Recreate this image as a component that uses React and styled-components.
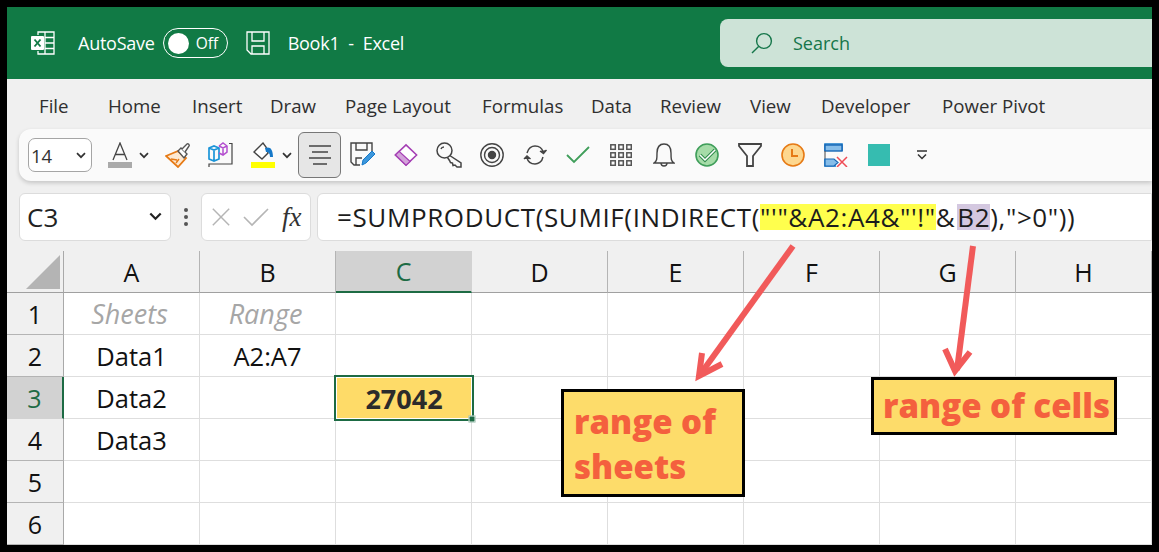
import React from "react";
import styled, { createGlobalStyle } from "styled-components";

const Global = createGlobalStyle`
  html, body { margin: 0; padding: 0; background: #000; }
  body { font-family: "Open Sans", "Noto Sans", sans-serif; }
`;

const Frame = styled.div`
  position: relative;
  box-sizing: border-box;
  width: 1159px;
  height: 552px;
  border: 7px solid #000;
  background: #fff;
  overflow: hidden;
  display: flex;
  flex-direction: column;
`;

const TitleBar = styled.header`
  height: 72px;
  flex: none;
  background: #117a45;
  color: #fff;
  display: flex;
  align-items: center;
  padding-left: 24px;
`;
const TitleText = styled.span`
  font-size: 18px;
  letter-spacing: -0.25px;
  white-space: pre;
  margin-left: ${(p) => p.$ml || 0}px;
`;
const Toggle = styled.div`
  box-sizing: border-box;
  width: 65px;
  height: 30px;
  margin-left: 8px;
  border: 1px solid #fff;
  border-radius: 15px;
  display: flex;
  align-items: center;
  padding-left: 4px;
  gap: 7px;
  font-size: 15.5px;
`;
const Knob = styled.span`
  width: 21px;
  height: 21px;
  border-radius: 50%;
  background: #fff;
`;
const SearchBox = styled.div`
  margin-left: auto;
  width: 432px;
  height: 48px;
  background: #cde3d7;
  border-radius: 8px 0 0 8px;
  display: flex;
  align-items: center;
  padding-left: 31px;
  gap: 20px;
  color: #15764a;
  font-size: 18px;
  box-sizing: border-box;
`;

const Ribbon = styled.section`
  flex: none;
  height: 172px;
  box-sizing: border-box;
  background: #f0f0f0;
  display: flex;
  flex-direction: column;
  padding-left: 12px;
`;
const Tabs = styled.nav`
  height: 50px;
  display: flex;
  align-items: center;
  padding: 3px 0 0 20px;
  box-sizing: border-box;
  color: #2f2f2f;
  font-size: 18.7px;
`;
const Tab = styled.span`
  width: ${(p) => p.$w}px;
  flex: none;
  white-space: nowrap;
`;
const Toolbar = styled.div`
  height: 52px;
  box-sizing: border-box;
  background: #fafafa;
  border-radius: 12px 0 0 12px;
  box-shadow: 0 2px 4px rgba(0, 0, 0, 0.18);
  display: flex;
  align-items: center;
  padding-left: 9px;
`;
const FontSelect = styled.div`
  box-sizing: border-box;
  width: 64px;
  height: 34px;
  background: #fff;
  border: 1px solid #a5a5a5;
  border-radius: 7px;
  display: flex;
  align-items: center;
  justify-content: space-between;
  padding: 0 5px 0 2px;
  font-size: 18.5px;
  color: #333;
  margin-right: 10px;
`;
const IconSlot = styled.div`
  flex: none;
  width: ${(p) => p.$w || 43}px;
  margin-left: ${(p) => p.$ml || 0}px;
  display: flex;
  justify-content: center;
  align-items: center;
`;
const ActiveSlot = styled.div`
  flex: none;
  box-sizing: border-box;
  width: 43px;
  height: 46px;
  margin-left: 5px;
  background: #e6e6e6;
  border: 1px solid #777;
  border-radius: 6px;
  display: flex;
  justify-content: center;
  align-items: center;
`;
const FormulaRow = styled.div`
  height: 48px;
  margin-top: 12px;
  display: flex;
  align-items: stretch;
`;
const Field = styled.div`
  box-sizing: border-box;
  background: #fff;
  border: 1px solid #dcdcdc;
  border-radius: 6px;
  display: flex;
  align-items: center;
`;
const NameBox = styled(Field)`
  width: 152px;
  padding: 0 8px 0 7px;
  justify-content: space-between;
  font-size: 26px;
  color: #222;
`;
const Dots = styled.div`
  width: 30px;
  display: flex;
  flex-direction: column;
  align-items: center;
  justify-content: center;
  gap: 3px;
  & > i { width: 4px; height: 4px; background: #555; border-radius: 50%; }
`;
const FxBox = styled(Field)`
  width: 110px;
  padding-left: 9px;
  gap: 12px;
`;
const FxText = styled.span`
  font-family: "Liberation Serif", serif;
  font-style: italic;
  font-weight: 400;
  font-size: 27px;
  color: #333;
  margin-left: 1px;
`;
const FormulaBox = styled(Field)`
  flex: 1;
  margin-left: 6px;
  padding-left: 19px;
  font-size: 26px;
  letter-spacing: 0.62px;
  color: #1c1c1c;
  border-radius: 6px 0 0 6px;
  white-space: pre;
`;
const Mark = styled.span`
  display: inline-block;
  line-height: 26px;
  background: ${(p) => p.$c};
  margin-left: ${(p) => p.$ml || 0}px;
`;

const Sheet = styled.div`
  display: grid;
  grid-template-columns: 57px repeat(8, 136px);
  grid-auto-rows: 42px;
  flex: none;
`;
const Corner = styled.div`
  box-sizing: border-box;
  background: #f0f0f0;
  border-right: 1px solid #a9a9a9;
  border-bottom: 1px solid #a0a0a0;
  display: flex;
  align-items: flex-end;
  justify-content: flex-end;
  padding: 0 3px 3px 0;
`;
const ColHead = styled.div`
  box-sizing: border-box;
  background: ${(p) => (p.$on ? "#d2d2d2" : "#f0f0f0")};
  color: ${(p) => (p.$on ? "#1d6b44" : "#111")};
  border-right: 1px solid ${(p) => (p.$on ? "#d2d2d2" : "#b4b4b4")};
  border-bottom: ${(p) => (p.$on ? "2px solid #1d6b44" : "1px solid #a0a0a0")};
  display: flex;
  align-items: center;
  justify-content: center;
  font-size: 25px;
`;
const RowHead = styled.div`
  box-sizing: border-box;
  background: ${(p) => (p.$on ? "#d2d2d2" : "#f0f0f0")};
  color: ${(p) => (p.$on ? "#1d6b44" : "#111")};
  border-right: ${(p) => (p.$on ? "2px solid #1d6b44" : "1px solid #a9a9a9")};
  border-bottom: 1px solid ${(p) => (p.$on ? "#d2d2d2" : "#b4b4b4")};
  display: flex;
  align-items: center;
  justify-content: center;
  font-size: 25px;
`;
const Cell = styled.div`
  box-sizing: border-box;
  border-right: 1px solid #dedede;
  border-bottom: 1px solid #dedede;
  display: flex;
  align-items: center;
  justify-content: center;
  font-size: 25.5px;
  color: #111;
`;
const NoteCell = styled(Cell)`
  font-style: italic;
  font-size: 27px;
  color: #a6a6a6;
  padding-right: 4px;
`;
const ActiveCell = styled(Cell)`
  position: relative;
  z-index: 1;
  background: #fedb68;
  font-weight: 700;
  font-size: 27px;
  color: #2b2b2b;
  border: 1px solid #fff;
  outline: 2px solid #1d6b44;
  &::after {
    content: "";
    position: absolute;
    right: -5px;
    bottom: -5px;
    width: 6px;
    height: 6px;
    background: #1d6b44;
    border: 1px solid #fff;
    transform: scale(0.85);
  }
`;
const Callout = styled.div`
  position: absolute;
  z-index: 3;
  left: ${(p) => p.$x}px;
  top: ${(p) => p.$y}px;
  width: ${(p) => p.$w}px;
  height: ${(p) => p.$h}px;
  box-sizing: border-box;
  background: #fddc6a;
  border: 3px solid #000;
  color: #f4603e;
  font-weight: 800;
  font-size: 33px;
  line-height: 45px;
  padding: ${(p) => p.$pad};
  white-space: pre;
`;
const ArrowLayer = styled.svg`
  position: absolute;
  z-index: 2;
  left: -7px;
  top: -7px;
  pointer-events: none;
`;

const Chevron = ({ color = "#333", size = 10 }) => (
  <svg width={size} height={size * 0.7} viewBox="0 0 10 7"><path d="M1 1.2 5 5.2 9 1.2" fill="none" stroke={color} strokeWidth="1.7" /></svg>
);
const ExcelLogo = () => (
  <svg width="24" height="24" viewBox="0 0 24 24">
    <path d="M7 4V1h16v22H7v-3M14 1.500v21M14 6.500h9M14 12h9M14 17.500h9" fill="none" stroke="#fff" strokeWidth="1.300" />
    <rect x="0" y="5" width="13" height="14" rx="1" fill="#fff" />
    <path d="M3.500 8.500l6 7M9.500 8.500l-6 7" stroke="#117a45" strokeWidth="1.900" />
  </svg>
);
const SaveIcon = () => (
  <svg width="24" height="24" viewBox="0 0 24 24" fill="none" stroke="#fff" strokeWidth="1.300">
    <path d="M1 1h22v22H5l-4-4z" />
    <path d="M6 1v9h12V1M6 23v-8h12v8" />
  </svg>
);
const SearchIcon = () => (
  <svg width="22" height="22" viewBox="0 0 22 22" fill="none" stroke="#15764a" strokeWidth="1.400">
    <circle cx="13" cy="9" r="7.400" />
    <path d="M7.600 14.400 1 21" />
  </svg>
);
const FontColor = () => (
  <svg width="24" height="26" viewBox="0 0 24 26">
    <path d="M5 18 12 1l7 17M7.500 12.500h9" fill="none" stroke="#444" strokeWidth="1.300" />
    <rect y="20" width="24" height="6" fill="#aaa" />
  </svg>
);
const Brush = () => (
  <svg width="26" height="26" viewBox="0 0 26 26" fill="none">
    <path d="M1 14 13 9l8 7-8 9z" stroke="#e67a15" strokeWidth="1.800" fill="#fde9d2" />
    <path d="M6 17l6 1M11 21l3-4" stroke="#e67a15" strokeWidth="1.400" />
    <path d="M13 9l3-3 6 6-3 4z" stroke="#555" strokeWidth="1.400" fill="#fff" />
    <path d="M17 7l5-5c1-1 3 1 2 2l-4 6" stroke="#555" strokeWidth="1.400" fill="#fff" />
  </svg>
);
const Cubes = () => (
  <svg width="26" height="26" viewBox="0 0 26 26" fill="none">
    <path d="M1 6l5-2 5 2v11l-5 2-5-2zM1 6l5 2 5-2M6 8v11" stroke="#1a94d8" strokeWidth="1.700" />
    <path d="M11 4l4-3 4 3v6l-4 3-4-2M11 4l4 2 4-2M15 6v6" stroke="#b44fcf" strokeWidth="1.500" />
    <path d="M21 1.500h3V22H1v3M9 22h12" stroke="#444" strokeWidth="1.200" />
  </svg>
);
const FillColor = () => (
  <svg width="24" height="26" viewBox="0 0 24 26" fill="none">
    <path d="M3 10 12 1l3 4 2 6-6 6z" stroke="#444" strokeWidth="1.400" fill="#fff" />
    <path d="M14 6c5-2 8 1 8 9h-3c0-3-1-5-4-5z" fill="#1679c9" />
    <rect y="20" width="24" height="6" fill="#ffff00" />
  </svg>
);
const AlignIcon = () => (
  <svg width="22" height="20" viewBox="0 0 22 20" stroke="#444" strokeWidth="1.400"><path d="M0 1h22M3 7h16M0 13h22M4 19h14" /></svg>
);
const SavePen = () => (
  <svg width="26" height="26" viewBox="0 0 26 26" fill="none">
    <path d="M10 23H4l-3-3V1h21v8" stroke="#444" strokeWidth="1.400" />
    <path d="M6 1v7h11V1M6 23v-7h6" stroke="#444" strokeWidth="1.400" />
    <path d="M12 23l1-5L22 9l3 3-9 9z" fill="#3c97dc" stroke="#1679c9" />
  </svg>
);
const Eraser = () => (
  <svg width="24" height="24" viewBox="0 0 26 26">
    <path d="M13 2 24.500 13 13 24 1.500 13z" fill="#fff" stroke="#a53fb4" strokeWidth="1.700" />
    <path d="M1.500 13 5.500 9 17.500 20 13 24z" fill="#d3a3da" stroke="#a53fb4" strokeWidth="1.300" />
  </svg>
);
const KeyIcon = () => (
  <svg width="26" height="26" viewBox="0 0 26 26" fill="none" stroke="#444" strokeWidth="1.500">
    <path d="M13 13 25 21v4h-4l-2-2-2 .5-.5-2.500-2-.5-1-2-2-3" />
    <circle cx="8.500" cy="8.500" r="7.500" fill="#fafafa" />
    <path d="M5 7c.5-1.500 2-2 3-2" />
  </svg>
);
const Target = () => (
  <svg width="24" height="24" viewBox="0 0 24 24" fill="none" stroke="#444" strokeWidth="1.400">
    <circle cx="12" cy="12" r="11.200" /><circle cx="12" cy="12" r="7.500" /><circle cx="12" cy="12" r="3.500" fill="#444" />
  </svg>
);
const Refresh = () => (
  <svg width="24" height="22" viewBox="0 0 24 22" fill="none" stroke="#444" strokeWidth="1.400">
    <path d="M4 9C5 4 9 2 12 2c4 0 7 2 8 6M20 13c-1 5-5 7-8 7-4 0-7-2-8-6" />
    <path d="M17 7l3.500 2.500L23.500 6M1 15l3-3 3.500 3" fill="#444" />
  </svg>
);
const Check = () => (
  <svg width="24" height="18" viewBox="0 0 24 18" fill="none" stroke="#3f9e5a" strokeWidth="1.800"><path d="M1 9l7 7L23 1" /></svg>
);
const GridIcon = () => (
  <svg width="22" height="22" viewBox="0 0 22 22" fill="none" stroke="#555" strokeWidth="1.500">
    {[0, 8, 16].flatMap((x) => [0, 8, 16].map((y) => <rect key={`${x}-${y}`} x={x + 0.8} y={y + 0.8} width="4.500" height="4.500" />))}
  </svg>
);
const Bell = () => (
  <svg width="22" height="25" viewBox="0 0 22 25" fill="none" stroke="#444" strokeWidth="1.400">
    <path d="M1 20c3-2 3-4 3-10 0-6 3-9 7-9s7 3 7 9c0 6 0 8 3 10z" /><path d="M8 20c0 4 6 4 6 0" />
  </svg>
);
const GreenCheck = () => (
  <svg width="24" height="24" viewBox="0 0 24 24">
    <circle cx="12" cy="12" r="11" fill="#a6dca8" stroke="#3f9e5a" strokeWidth="1.600" />
    <path d="M5 12l5 5L20 7" fill="none" stroke="#2f8b4b" strokeWidth="3.600" />
    <path d="M5 12l5 5L20 7" fill="none" stroke="#fff" strokeWidth="1.500" />
  </svg>
);
const Filter = () => (
  <svg width="24" height="24" viewBox="0 0 24 24" fill="none" stroke="#444" strokeWidth="1.800">
    <path d="M1 1h22v2l-8 10v10H9V13L1 3z" />
  </svg>
);
const Clock = () => (
  <svg width="24" height="24" viewBox="0 0 24 24">
    <circle cx="12" cy="12" r="11" fill="#fdd78f" stroke="#e67a15" strokeWidth="1.600" />
    <path d="M11 6v7h6" fill="none" stroke="#e67a15" strokeWidth="2" />
  </svg>
);
const FormX = () => (
  <svg width="24" height="24" viewBox="0 0 24 24">
    <path d="M1 8V1h17v7M1 16v7h11" fill="none" stroke="#1679c9" strokeWidth="1.600" />
    <rect x="1" y="2" width="17" height="6" fill="#86bde9" stroke="#1667b5" strokeWidth="1.400" />
    <path d="M1 8v8" stroke="#444" />
    <path d="M1 16h9l4 3.500-4 3.500H1z" fill="#86bde9" stroke="#1667b5" strokeWidth="1.200" />
    <path d="M13 14 23 24M23 14 13 24" stroke="#ef4b55" strokeWidth="1.500" />
  </svg>
);
const Swatch = () => (
  <svg width="22" height="22" viewBox="0 0 22 22"><rect width="22" height="22" fill="#36bcb0" /></svg>
);
const Overflow = () => (
  <svg width="12" height="10" viewBox="0 0 12 10" fill="none" stroke="#333" strokeWidth="1.500"><path d="M1 1h10M2 4.500 6 8.500l4-4" /></svg>
);

const TABS = [
  ["File", 69], ["Home", 84], ["Insert", 78], ["Draw", 75], ["Page Layout", 137], ["Formulas", 109],
  ["Data", 69], ["Review", 90], ["View", 71], ["Developer", 121], ["Power Pivot", 120],
];
const COLS = ["A", "B", "C", "D", "E", "F", "G", "H"];
const TOOLS = [SavePen, Eraser, KeyIcon, Target, Refresh, Check, GridIcon, Bell, GreenCheck, Filter, Clock, FormX, Swatch, Overflow];
const DATA = { A1: ["Sheets", 1], B1: ["Range", 1], A2: ["Data1"], B2: ["A2:A7"], A3: ["Data2"], A4: ["Data3"] };

export default function App() {
  return (
    <>
      <Global />
      <Frame>
        <TitleBar>
          <ExcelLogo />
          <TitleText $ml={23}>AutoSave</TitleText>
          <Toggle><Knob /><span>Off</span></Toggle>
          <IconSlot $w={24} $ml={18}><SaveIcon /></IconSlot>
          <TitleText $ml={18}>Book1  -  Excel</TitleText>
          <SearchBox><SearchIcon /><span>Search</span></SearchBox>
        </TitleBar>
        <Ribbon>
          <Tabs>{TABS.map(([t, w]) => <Tab key={t} $w={w}>{t}</Tab>)}</Tabs>
          <Toolbar>
            <FontSelect><span>14</span><Chevron /></FontSelect>
            <IconSlot $w={36}><FontColor /></IconSlot>
            <IconSlot $w={12}><Chevron /></IconSlot>
            <IconSlot $ml={6}><Brush /></IconSlot>
            <IconSlot><Cubes /></IconSlot>
            <IconSlot $w={36} $ml={3}><FillColor /></IconSlot>
            <IconSlot $w={12}><Chevron /></IconSlot>
            <ActiveSlot><AlignIcon /></ActiveSlot>
            {TOOLS.map((I, i) => <IconSlot key={i}><I /></IconSlot>)}
          </Toolbar>
          <FormulaRow>
            <NameBox><span>C3</span><Chevron color="#222" size={13} /></NameBox>
            <Dots><i /><i /><i /></Dots>
            <FxBox>
              <svg width="20" height="20" viewBox="0 0 22 22" stroke="#b5b5b5" strokeWidth="1.600"><path d="M2 2l18 18M20 2 2 20" /></svg>
              <svg width="26" height="20" viewBox="0 0 26 20" fill="none" stroke="#b5b5b5" strokeWidth="1.600"><path d="M1 10l8 8L25 2" /></svg>
              <FxText>fx</FxText>
            </FxBox>
            <FormulaBox>
              =SUMPRODUCT(SUMIF(INDIRECT(<Mark $c="#ffff4d">"'"&amp;A2:A4&amp;"'!"</Mark>&amp;<Mark $c="#d4c8e0" $ml={2}>B2</Mark>),"&gt;0"))
            </FormulaBox>
          </FormulaRow>
        </Ribbon>
        <Sheet>
          <Corner><svg width="34" height="34" viewBox="0 0 34 34"><path d="M34 0v34H0z" fill="#b4b4b4" /></svg></Corner>
          {COLS.map((c) => <ColHead key={c} $on={c === "C"}>{c}</ColHead>)}
          {[1, 2, 3, 4, 5, 6].map((r) => (
            <React.Fragment key={r}>
              <RowHead $on={r === 3}>{r}</RowHead>
              {COLS.map((c) => {
                const id = c + r;
                if (id === "C3") return <ActiveCell key={id}>27042</ActiveCell>;
                const d = DATA[id];
                if (d && d[1]) return <NoteCell key={id}>{d[0]}</NoteCell>;
                return <Cell key={id}>{d ? d[0] : ""}</Cell>;
              })}
            </React.Fragment>
          ))}
        </Sheet>
        <ArrowLayer width="1159" height="552" viewBox="0 0 1159 552" fill="none" stroke="#f15a5a" strokeWidth="6">
          <path d="M793 246 702 372" />
          <path d="M702 353 699 376 722 364" />
          <path d="M973 246 957 370" />
          <path d="M945 349 955 371 970 352" />
        </ArrowLayer>
        <Callout $x={554} $y={382} $w={184} $h={108} $pad="7px 0 0 10px">{"range of\nsheets"}</Callout>
        <Callout $x={864} $y={370} $w={246} $h={58} $pad="3px 0 0 9px">range of cells</Callout>
      </Frame>
    </>
  );
}
